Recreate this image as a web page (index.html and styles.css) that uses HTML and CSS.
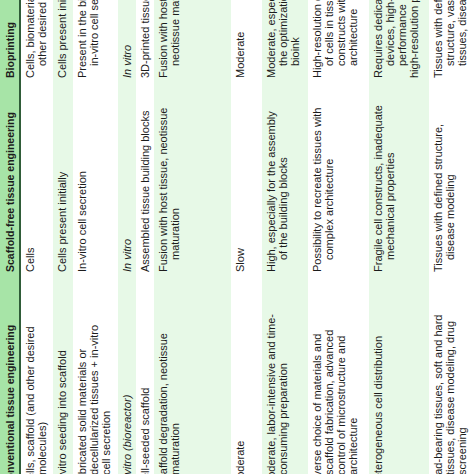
FILE: index.html
```html
<!DOCTYPE html>
<html lang="en">
<head>
<meta charset="utf-8">
<title>Tissue engineering comparison</title>
<link rel="stylesheet" href="styles.css">
</head>
<body>
<div class="stage">
  <div class="rotor">
    <table class="cmp">
      <colgroup>
        <col class="c-conv">
        <col class="c-sf">
        <col class="c-bp">
      </colgroup>
      <thead>
        <tr class="head">
          <th>Conventional tissue engineering</th>
          <th>Scaffold-free tissue engineering</th>
          <th>Bioprinting</th>
        </tr>
      </thead>
      <tbody>
        <tr class="r1">
          <td>Cells, scaffold (and other desired<br>molecules)</td>
          <td>Cells</td>
          <td>Cells, biomaterials (and<br>other desired molecules)</td>
        </tr>
        <tr class="r2 alt">
          <td>In-vitro seeding into scaffold</td>
          <td>Cells present initially</td>
          <td>Cells present initially</td>
        </tr>
        <tr class="r3">
          <td>Fabricated solid materials or<br>decellularized tissues + in-vitro<br>cell secretion</td>
          <td>In-vitro cell secretion</td>
          <td>Present in the bioink,<br>in-vitro cell secretion</td>
        </tr>
        <tr class="r4 alt">
          <td><em>In vitro (bioreactor)</em></td>
          <td><em>In vitro</em></td>
          <td><em>In vitro</em></td>
        </tr>
        <tr class="r5">
          <td>Cell-seeded scaffold</td>
          <td>Assembled tissue building blocks</td>
          <td>3D-printed tissue</td>
        </tr>
        <tr class="r6 alt">
          <td>Scaffold degradation, neotissue<br>maturation</td>
          <td>Fusion with host tissue, neotissue<br>maturation</td>
          <td>Fusion with host tissue,<br>neotissue maturation</td>
        </tr>
        <tr class="r7">
          <td>Moderate</td>
          <td>Slow</td>
          <td>Moderate</td>
        </tr>
        <tr class="r8 alt">
          <td>Moderate, labor-intensive and time-<br>consuming preparation</td>
          <td>High, especially for the assembly<br>of the building blocks</td>
          <td>Moderate, especially for<br>the optimization of the<br>bioink</td>
        </tr>
        <tr class="r9">
          <td>Diverse choice of materials and<br>scaffold fabrication, advanced<br>control of microstructure and<br>architecture</td>
          <td>Possibility to recreate tissues with<br>complex architecture</td>
          <td>High-resolution deposition<br>of cells in tissue<br>constructs with complex<br>architecture</td>
        </tr>
        <tr class="r10 alt">
          <td>Heterogeneous cell distribution</td>
          <td>Fragile cell constructs, inadequate<br>mechanical properties</td>
          <td>Requires dedicated<br>devices, high-<br>performance<div class="para">high-resolution printers</div></td>
        </tr>
        <tr class="r11">
          <td>Load-bearing tissues, soft and hard<br>tissues, disease modeling, drug<br>screening</td>
          <td>Tissues with defined structure,<br>disease modeling</td>
          <td>Tissues with defined<br>structure, vascularized<br>tissues, disease modeling</td>
        </tr>
      </tbody>
    </table>
  </div>
</div>
</body>
</html>
```

FILE: styles.css
```css
html, body {
  margin: 0;
  padding: 0;
  background: #ffffff;
}

.stage {
  width: 474px;
  height: 474px;
  overflow: hidden;
}

.rotor {
  width: 474px;
  height: 474px;
  transform: rotate(-90deg);
  transform-origin: 237px 237px;
}

.cmp {
  margin-left: -19px;
  border-collapse: separate;
  border-spacing: 0;
  table-layout: fixed;
  width: 609px;
  font-family: "Liberation Sans", Arial, sans-serif;
  font-size: 11px;
  line-height: 12px;
  color: #1c1c1c;
}

.c-conv { width: 215px; }
.c-sf { width: 194px; }
.c-bp { width: 200px; }

.cmp th {
  height: 19px;
  padding: 0 0 0 6px;
  background: #a7e4a7;
  border-bottom: 2px solid #2f5c38;
  text-align: left;
  vertical-align: middle;
  font-size: 10.5px;
  font-weight: bold;
  white-space: nowrap;
  overflow: hidden;
}

.cmp td {
  vertical-align: top;
  padding: 3px 0 1px 18px;
  text-indent: -12px;
  white-space: nowrap;
  overflow: hidden;
}

.cmp em {
  font-style: italic;
}

.alt td {
  background: #e7f9e7;
}

.r1 { height: 32px; }
.r2 { height: 20px; }
.r3 { height: 45px; }
.r4 { height: 18px; }
.r5 { height: 18px; }
.r6 { height: 77px; }
.r7 { height: 31px; }
.r8 { height: 46px; }
.r9 { height: 61px; }
.r10 { height: 60px; }
.r11 { height: 60px; }
```
